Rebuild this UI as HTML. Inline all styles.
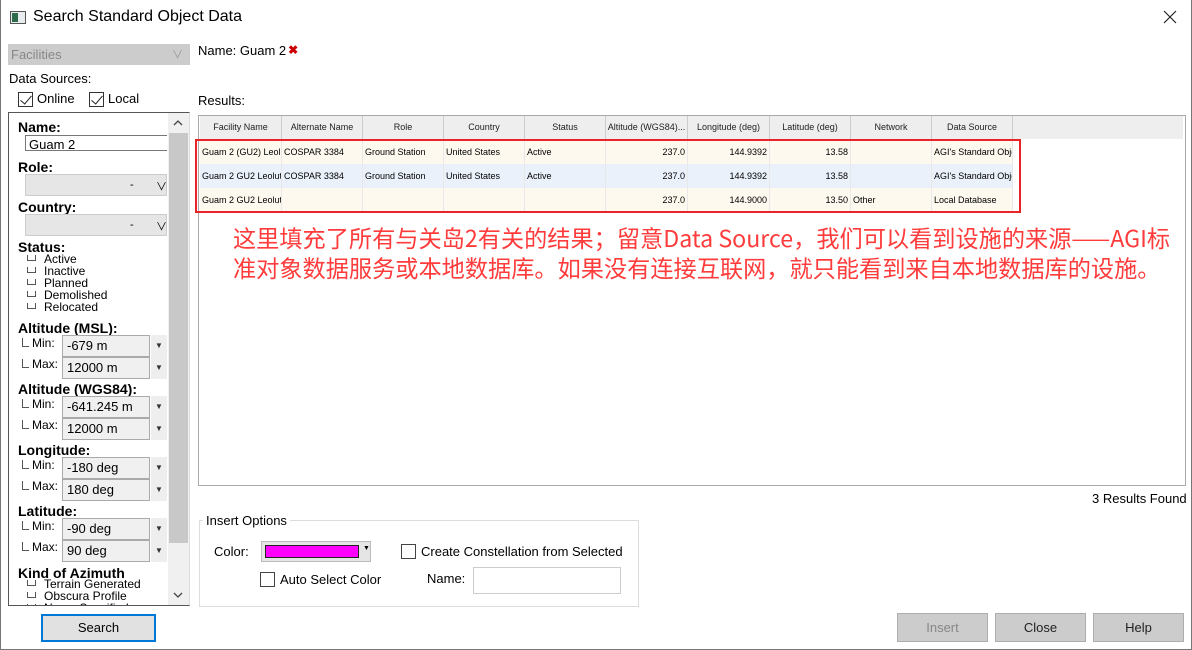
<!DOCTYPE html>
<html><head><meta charset="utf-8"><style>
*{box-sizing:border-box;margin:0;padding:0}
body{width:1192px;height:650px;overflow:hidden;background:#fff;font-family:"Liberation Sans","Noto Sans CJK SC",sans-serif;font-size:13px;color:#000;position:relative}
.a{position:absolute;white-space:nowrap}
.cb{position:absolute;width:15px;height:15px;border:1px solid #333;background:#fff}
.cb.k::after{content:"";position:absolute;left:4px;top:0px;width:5px;height:10px;border:solid #222;border-width:0 1.5px 1.5px 0;transform:rotate(40deg)}
.lbl{font-weight:bold;font-size:14px;position:absolute;left:18px;white-space:nowrap}
.sq{position:absolute;left:28px;font-size:12px;white-space:nowrap}
.sq::before{content:"";position:absolute;left:-1px;top:3px;width:7px;height:5px;border:1px solid #555;border-top:none}
.sq span{margin-left:16px}
.in{position:absolute;left:62px;width:88px;height:22px;background:#f0f0f0;border:1px solid #aaa;font-size:13px;padding:2px 4px}
.sp{position:absolute;left:151px;width:16px;height:22px;background:#eee;font-size:8px;text-align:center;line-height:22px;color:#333}
.ml{position:absolute;left:22px;font-size:12px}
.ml::before{content:"";position:absolute;left:0;top:2px;width:6px;height:8px;border:1px solid #555;border-top:none;border-right:none}
.ml span{margin-left:10px}
.hd{position:absolute;top:116px;height:23px;background:#eee;border-right:1px solid #ccc;font-size:9px;text-align:center;line-height:23px;color:#222;white-space:nowrap;overflow:hidden}
.row{position:absolute;left:200px;width:813px;height:24px;font-size:9px;line-height:24px;white-space:nowrap}
.row div{position:absolute;top:0;height:24px;border-right:1px solid #e8e8e8;padding:0 2px;overflow:hidden;white-space:nowrap}
.r{text-align:right}
.btn{position:absolute;top:613px;width:91px;height:29px;background:#ccc;border:1px solid #adadad;text-align:center;line-height:27px;font-size:13px;color:#222}
</style></head><body>
<div class="a" style="left:0;top:0;width:1192px;height:650px;border:1px solid #777;border-top:none"></div>
<div class="a" style="left:10px;top:11px;width:16px;height:13px;background:#e8ecef;border:1px solid #555"><div style="position:absolute;left:1px;top:1px;width:6px;height:9px;background:#2e6b4a"></div></div>
<div class="a" style="left:33px;top:8px;font-size:16px">Search Standard Object Data</div>
<svg class="a" style="left:1163px;top:10px" width="14" height="14"><path d="M1 1L13 13M13 1L1 13" stroke="#222" stroke-width="1.2"/></svg>
<div class="a" style="left:8px;top:44px;width:182px;height:21px;background:#ccc;border:1px solid #ccc;color:#888;font-size:13px;padding:2px 2px">Facilities<span style="position:absolute;right:6px;top:1px;color:#999;font-size:11px">&#x2228;</span></div>
<div class="a" style="left:9px;top:71px;font-size:13px">Data Sources:</div>
<div class="cb k" style="left:18px;top:92px"></div><div class="a" style="left:37px;top:91px;font-size:13px">Online</div>
<div class="cb k" style="left:89px;top:92px"></div><div class="a" style="left:108px;top:91px;font-size:13px">Local</div>
<div class="a" style="left:8px;top:112px;width:182px;height:494px;border:1px solid #555;border-right:1px solid #ddd;overflow:hidden;background:#fff">
 <div class="a" style="left:159px;top:0;width:21px;height:492px;background:#f0f0f0"></div>
 <div class="a" style="left:160px;top:20px;width:19px;height:410px;background:#c8c8c8"></div>
 <svg class="a" style="left:164px;top:6px" width="10" height="8"><path d="M1 6L5 2L9 6" stroke="#444" fill="none" stroke-width="1.3"/></svg>
 <svg class="a" style="left:164px;top:478px" width="10" height="8"><path d="M1 2L5 6L9 2" stroke="#444" fill="none" stroke-width="1.3"/></svg>
</div>
<div class="a" style="left:9px;top:113px;width:158px;height:492px;overflow:hidden">
 <div class="lbl" style="left:9px;top:6px">Name:</div>
 <div class="a" style="left:16px;top:22px;width:142px;height:16px;border:1px solid #777;border-right:none;font-size:13px;padding:0 3px;line-height:17px">Guam 2</div>
 <div class="lbl" style="left:9px;top:46px">Role:</div>
 <div class="a" style="left:16px;top:61px;width:142px;height:22px;background:#e6e6e6;border:1px solid #ccc;font-size:11px"><span style="position:absolute;left:104px;top:4px">-</span><span style="position:absolute;left:130px;top:3px">&#x2228;</span></div>
 <div class="lbl" style="left:9px;top:86px">Country:</div>
 <div class="a" style="left:16px;top:101px;width:142px;height:22px;background:#e6e6e6;border:1px solid #ccc;font-size:11px"><span style="position:absolute;left:104px;top:4px">-</span><span style="position:absolute;left:130px;top:3px">&#x2228;</span></div>
 <div class="lbl" style="left:9px;top:126px">Status:</div>
 <div class="sq" style="left:19px;top:139px"><span>Active</span></div>
 <div class="sq" style="left:19px;top:151px"><span>Inactive</span></div>
 <div class="sq" style="left:19px;top:163px"><span>Planned</span></div>
 <div class="sq" style="left:19px;top:175px"><span>Demolished</span></div>
 <div class="sq" style="left:19px;top:187px"><span>Relocated</span></div>
</div>
<div class="a" style="left:0;top:0;width:167px;height:605px;overflow:hidden">
 <div class="lbl" style="top:320px">Altitude (MSL):</div>
 <div class="ml" style="top:336px"><span>Min:</span></div><div class="in" style="top:335px">-679 m</div><div class="sp" style="top:335px">&#x25BC;</div>
 <div class="ml" style="top:357px"><span>Max:</span></div><div class="in" style="top:357px">12000 m</div><div class="sp" style="top:357px">&#x25BC;</div>
 <div class="lbl" style="top:381px">Altitude (WGS84):</div>
 <div class="ml" style="top:397px"><span>Min:</span></div><div class="in" style="top:396px">-641.245 m</div><div class="sp" style="top:396px">&#x25BC;</div>
 <div class="ml" style="top:418px"><span>Max:</span></div><div class="in" style="top:418px">12000 m</div><div class="sp" style="top:418px">&#x25BC;</div>
 <div class="lbl" style="top:442px">Longitude:</div>
 <div class="ml" style="top:458px"><span>Min:</span></div><div class="in" style="top:457px">-180 deg</div><div class="sp" style="top:457px">&#x25BC;</div>
 <div class="ml" style="top:479px"><span>Max:</span></div><div class="in" style="top:479px">180 deg</div><div class="sp" style="top:479px">&#x25BC;</div>
 <div class="lbl" style="top:503px">Latitude:</div>
 <div class="ml" style="top:519px"><span>Min:</span></div><div class="in" style="top:518px">-90 deg</div><div class="sp" style="top:518px">&#x25BC;</div>
 <div class="ml" style="top:540px"><span>Max:</span></div><div class="in" style="top:540px">90 deg</div><div class="sp" style="top:540px">&#x25BC;</div>
 <div class="lbl" style="top:565px">Kind of Azimuth</div>
 <div class="sq" style="top:577px"><span>Terrain Generated</span></div>
 <div class="sq" style="top:589px"><span>Obscura Profile</span></div>
 <div class="sq" style="top:601px"><span>Name Specified</span></div>
</div>
<div class="a" style="left:41px;top:614px;width:115px;height:28px;background:#e1e1e1;border:2px solid #0078d7;text-align:center;line-height:24px;font-size:13px">Search</div>
<div class="a" style="left:198px;top:43px;font-size:13px">Name: Guam 2<span style="color:#c00;font-weight:bold;font-size:12px;vertical-align:top;margin-left:2px">&#x2716;</span></div>
<div class="a" style="left:198px;top:93px;font-size:13px">Results:</div>
<div class="a" style="left:198px;top:115px;width:988px;height:371px;border:1px solid #aaa;background:#fff"></div>
<div class="hd" style="left:200px;width:82px">Facility Name</div>
<div class="hd" style="left:282px;width:81px">Alternate Name</div>
<div class="hd" style="left:363px;width:81px">Role</div>
<div class="hd" style="left:444px;width:81px">Country</div>
<div class="hd" style="left:525px;width:81px">Status</div>
<div class="hd" style="left:606px;width:82px">Altitude (WGS84)...</div>
<div class="hd" style="left:688px;width:82px">Longitude (deg)</div>
<div class="hd" style="left:770px;width:81px">Latitude (deg)</div>
<div class="hd" style="left:851px;width:81px">Network</div>
<div class="hd" style="left:932px;width:81px">Data Source</div>
<div class="hd" style="left:1013px;width:170px;border-right:none"></div>
<div class="row" style="top:140px;background:#fdf9ee"><div style="left:0;width:82px">Guam 2 (GU2) Leolu</div><div style="left:82px;width:81px">COSPAR 3384</div><div style="left:163px;width:81px">Ground Station</div><div style="left:244px;width:81px">United States</div><div style="left:325px;width:81px">Active</div><div class="r" style="left:406px;width:82px">237.0</div><div class="r" style="left:488px;width:82px">144.9392</div><div class="r" style="left:570px;width:81px">13.58</div><div style="left:651px;width:81px"></div><div style="left:732px;width:81px">AGI's Standard Obje</div></div>
<div class="row" style="top:164px;background:#eaf1fb"><div style="left:0;width:82px">Guam 2 GU2 Leolut</div><div style="left:82px;width:81px">COSPAR 3384</div><div style="left:163px;width:81px">Ground Station</div><div style="left:244px;width:81px">United States</div><div style="left:325px;width:81px">Active</div><div class="r" style="left:406px;width:82px">237.0</div><div class="r" style="left:488px;width:82px">144.9392</div><div class="r" style="left:570px;width:81px">13.58</div><div style="left:651px;width:81px"></div><div style="left:732px;width:81px">AGI's Standard Obje</div></div>
<div class="row" style="top:188px;background:#fdf9ee"><div style="left:0;width:82px">Guam 2 GU2 Leolut</div><div style="left:82px;width:81px"></div><div style="left:163px;width:81px"></div><div style="left:244px;width:81px"></div><div style="left:325px;width:81px"></div><div class="r" style="left:406px;width:82px">237.0</div><div class="r" style="left:488px;width:82px">144.9000</div><div class="r" style="left:570px;width:81px">13.50</div><div style="left:651px;width:81px">Other</div><div style="left:732px;width:81px">Local Database</div></div>
<div class="a" style="left:195px;top:139px;width:826px;height:74px;border:2px solid #e8232a"></div>
<div class="a" style="left:233px;top:222px;font-size:23.2px;line-height:30px;color:#ff3b3b;font-family:'Noto Sans CJK SC','WenQuanYi Zen Hei',sans-serif">这里填充了所有与关岛2有关的结果；留意Data Source，我们可以看到设施的来源——AGI标<br>准对象数据服务或本地数据库。如果没有连接互联网，就只能看到来自本地数据库的设施。</div>
<div class="a" style="left:1092px;top:491px;font-size:13px">3 Results Found</div>
<div class="a" style="left:199px;top:520px;width:440px;height:87px;border:1px solid #ddd"></div>
<div class="a" style="left:203px;top:513px;background:#fff;padding:0 3px;font-size:13px">Insert Options</div>
<div class="a" style="left:214px;top:544px;font-size:13px">Color:</div>
<div class="a" style="left:261px;top:541px;width:110px;height:21px;background:#e5e5e5;border:1px solid #bbb"><div style="position:absolute;left:3px;top:3px;width:94px;height:13px;background:#ff00ff;border:1px solid #222"></div><div style="position:absolute;left:101px;top:3px;font-size:7px">&#x25BC;</div></div>
<div class="cb" style="left:260px;top:572px;border-color:#444"></div><div class="a" style="left:280px;top:572px;font-size:13px">Auto Select Color</div>
<div class="cb" style="left:401px;top:544px;border-color:#444"></div><div class="a" style="left:421px;top:544px;font-size:13px">Create Constellation from Selected</div>
<div class="a" style="left:427px;top:571px;font-size:13px">Name:</div>
<div class="a" style="left:473px;top:567px;width:148px;height:27px;border:1px solid #ccc"></div>
<div class="btn" style="left:897px;color:#888">Insert</div>
<div class="btn" style="left:995px">Close</div>
<div class="btn" style="left:1093px">Help</div>
</body></html>
